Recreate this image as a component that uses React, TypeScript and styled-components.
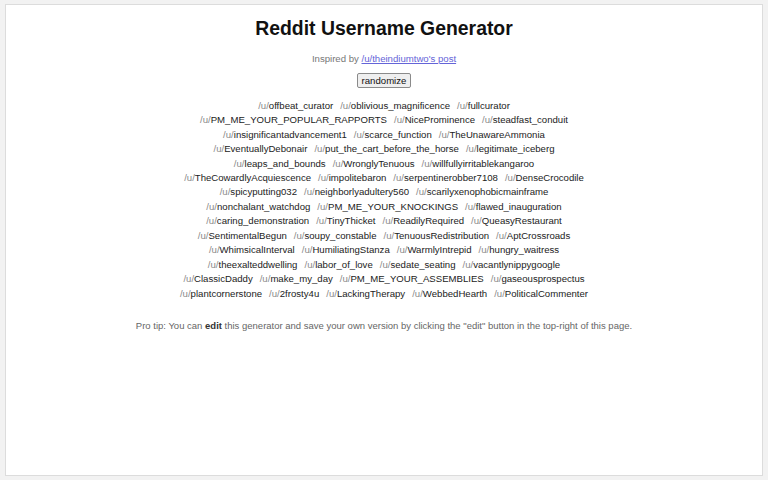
import styled, { createGlobalStyle } from "styled-components";

const GlobalStyle = createGlobalStyle`
  html, body {
    margin: 0;
    padding: 0;
    background: #f2f2f2;
    font-family: "Liberation Sans", Arial, sans-serif;
  }
`;

const Page = styled.div`
  box-sizing: border-box;
  margin: 4px 5px;
  height: 472px;
  background: #fff;
  border: 1px solid #dcdcdc;
  display: flex;
  flex-direction: column;
  align-items: center;
`;

const Title = styled.h1`
  margin: 12px 0 0;
  font-size: 19.4px;
  font-weight: 700;
  color: #111;
`;

const Credit = styled.div`
  margin-top: 13px;
  font-size: 9.6px;
  color: #777;
`;

const CreditLink = styled.a`
  color: #6464d8;
  text-decoration: underline;
`;

const RandomButton = styled.button`
  margin-top: 9px;
  font-family: "Liberation Sans", Arial, sans-serif;
  font-size: 9.6px;
  padding: 1px 4px;
  color: #111;
  background: #efefef;
  border: 1px solid #8a8a8a;
  border-radius: 2px;
`;

const NameList = styled.div`
  margin-top: 10px;
  display: flex;
  flex-direction: column;
  align-items: center;
`;

const NameRow = styled.div`
  display: flex;
  gap: 7px;
  height: 14.46px;
  align-items: center;
  font-size: 9.6px;
  white-space: nowrap;
`;

const Name = styled.span`
  color: #222;
`;

const Prefix = styled.span`
  color: #8a8a8a;
`;

const Tip = styled.p`
  margin: 20px 0 0;
  font-size: 9.5px;
  color: #666;

  b {
    color: #333;
  }
`;

const rows: string[][] = [
  ["offbeat_curator", "oblivious_magnificence", "fullcurator"],
  ["PM_ME_YOUR_POPULAR_RAPPORTS", "NiceProminence", "steadfast_conduit"],
  ["insignificantadvancement1", "scarce_function", "TheUnawareAmmonia"],
  ["EventuallyDebonair", "put_the_cart_before_the_horse", "legitimate_iceberg"],
  ["leaps_and_bounds", "WronglyTenuous", "willfullyirritablekangaroo"],
  ["TheCowardlyAcquiescence", "impolitebaron", "serpentinerobber7108", "DenseCrocodile"],
  ["spicyputting032", "neighborlyadultery560", "scarilyxenophobicmainframe"],
  ["nonchalant_watchdog", "PM_ME_YOUR_KNOCKINGS", "flawed_inauguration"],
  ["caring_demonstration", "TinyThicket", "ReadilyRequired", "QueasyRestaurant"],
  ["SentimentalBegun", "soupy_constable", "TenuousRedistribution", "AptCrossroads"],
  ["WhimsicalInterval", "HumiliatingStanza", "WarmlyIntrepid", "hungry_waitress"],
  ["theexalteddwelling", "labor_of_love", "sedate_seating", "vacantlynippygoogle"],
  ["ClassicDaddy", "make_my_day", "PM_ME_YOUR_ASSEMBLIES", "gaseousprospectus"],
  ["plantcornerstone", "2frosty4u", "LackingTherapy", "WebbedHearth", "PoliticalCommenter"],
];

const App = () => {
  return (
    <>
      <GlobalStyle />
      <Page>
        <Title>Reddit Username Generator</Title>
        <Credit>
          Inspired by <CreditLink href="#">/u/theindiumtwo's post</CreditLink>
        </Credit>
        <RandomButton>randomize</RandomButton>
        <NameList>
          {rows.map((row, i) => (
            <NameRow key={i}>
              {row.map((n) => (
                <Name key={n}>
                  <Prefix>/u/</Prefix>
                  {n}
                </Name>
              ))}
            </NameRow>
          ))}
        </NameList>
        <Tip>
          Pro tip: You can <b>edit</b> this generator and save your own version by clicking the "edit"
          button in the top-right of this page.
        </Tip>
      </Page>
    </>
  );
};

export default App;
